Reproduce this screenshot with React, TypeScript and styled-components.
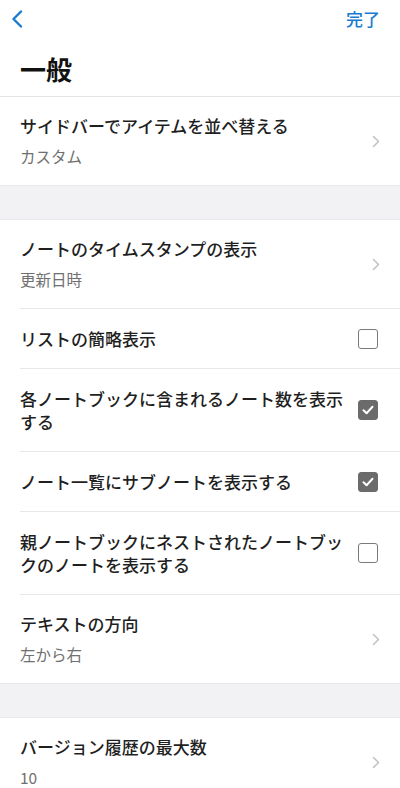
import React from 'react';
import styled, { createGlobalStyle } from 'styled-components';

const GlobalStyle = createGlobalStyle`
	html, body {
		margin: 0;
		padding: 0;
		background: #ffffff;
	}
	body {
		font-family: 'Noto Sans CJK JP', 'Noto Sans', sans-serif;
		-webkit-font-smoothing: antialiased;
	}
`;

type SettingItem =
	| { kind: 'link'; title: string; value: string }
	| { kind: 'check'; title: string; checked: boolean };

const sections: SettingItem[][] = [
	[{ kind: 'link', title: 'サイドバーでアイテムを並べ替える', value: 'カスタム' }],
	[
		{ kind: 'link', title: 'ノートのタイムスタンプの表示', value: '更新日時' },
		{ kind: 'check', title: 'リストの簡略表示', checked: false },
		{ kind: 'check', title: '各ノートブックに含まれるノート数を表示する', checked: true },
		{ kind: 'check', title: 'ノート一覧にサブノートを表示する', checked: true },
		{
			kind: 'check',
			title: '親ノートブックにネストされたノートブックのノートを表示する',
			checked: false,
		},
		{ kind: 'link', title: 'テキストの方向', value: '左から右' },
	],
	[{ kind: 'link', title: 'バージョン履歴の最大数', value: '10' }],
];

const BackIcon = () => (
	<svg width="12" height="18" viewBox="0 0 12 18" fill="none">
		<path
			d="M10 1.5L2.5 9L10 16.5"
			stroke="#1a7bd0"
			strokeWidth="2.4"
			strokeLinecap="round"
			strokeLinejoin="round"
		/>
	</svg>
);

const Chevron = () => (
	<svg width="8" height="13" viewBox="0 0 8 13" fill="none">
		<path
			d="M1.5 1.5L6.5 6.5L1.5 11.5"
			stroke="#c3c3c6"
			strokeWidth="1.6"
			strokeLinecap="round"
			strokeLinejoin="round"
		/>
	</svg>
);

const CheckMark = () => (
	<svg width="12" height="10" viewBox="0 0 12 10" fill="none">
		<path
			d="M1.5 5.2L4.6 8.2L10.5 1.8"
			stroke="#ffffff"
			strokeWidth="2"
			strokeLinecap="round"
			strokeLinejoin="round"
		/>
	</svg>
);

const SettingRow: React.FC<{ item: SettingItem; last: boolean }> = ({ item, last }) => {
	if (item.kind === 'link') {
		return (
			<Row $last={last} $tall>
				<RowText>
					<RowTitle>{item.title}</RowTitle>
					<RowValue>{item.value}</RowValue>
				</RowText>
				<ChevronWrap>
					<Chevron />
				</ChevronWrap>
			</Row>
		);
	}
	return (
		<Row $last={last}>
			<RowText>
				<RowTitle>{item.title}</RowTitle>
			</RowText>
			<Checkbox $checked={item.checked}>{item.checked && <CheckMark />}</Checkbox>
		</Row>
	);
};

const App: React.FC = () => {
	return (
		<>
			<GlobalStyle />
			<Screen>
				<Header>
					<NavBar>
						<BackButton>
							<BackIcon />
						</BackButton>
						<DoneButton>完了</DoneButton>
					</NavBar>
					<PageTitle>一般</PageTitle>
				</Header>
				{sections.map((section, i) => (
					<React.Fragment key={i}>
						{i > 0 && <SectionGap />}
						<Section>
							{section.map((item, j) => (
								<SettingRow key={item.title} item={item} last={j === section.length - 1} />
							))}
						</Section>
					</React.Fragment>
				))}
			</Screen>
		</>
	);
};

const Screen = styled.div`
	width: 400px;
	min-height: 788px;
	background: #ffffff;
	overflow: hidden;
`;

const Header = styled.div`
	height: 97px;
	box-sizing: border-box;
	border-bottom: 1px solid #e4e4e6;
	display: flex;
	flex-direction: column;
`;

const NavBar = styled.div`
	height: 38px;
	display: flex;
	align-items: center;
	justify-content: space-between;
	padding: 0 20px 0 11px;
`;

const BackButton = styled.div`
	display: flex;
	align-items: center;
	width: 20px;
	height: 20px;
`;

const DoneButton = styled.div`
	font-size: 17px;
	font-weight: 500;
	color: #1a7bd0;
	line-height: 20px;
`;

const PageTitle = styled.h1`
	margin: 14px 0 0 20px;
	font-size: 26px;
	line-height: 34px;
	font-weight: 700;
	color: #111111;
`;

const Section = styled.div`
	display: flex;
	flex-direction: column;
`;

const SectionGap = styled.div`
	height: 35px;
	background: #f2f2f4;
	border-top: 1px solid #e8e8ea;
	border-bottom: 1px solid #e8e8ea;
	box-sizing: border-box;
`;

const Row = styled.div<{ $last: boolean; $tall?: boolean }>`
	display: flex;
	align-items: center;
	margin-left: 20px;
	padding: ${(p) => (p.$tall ? '17px 0' : '18px 0')};
	min-height: 59px;
	box-sizing: border-box;
	border-bottom: ${(p) => (p.$last ? 'none' : '1px solid #e8e8ea')};
`;

const RowText = styled.div`
	flex: 1;
	display: flex;
	flex-direction: column;
	gap: 7px;
	padding-right: 10px;
`;

const RowTitle = styled.div`
	font-size: 17px;
	line-height: 23px;
	font-weight: 500;
	color: #1f1f1f;
`;

const RowValue = styled.div`
	font-size: 15.5px;
	line-height: 24px;
	color: #707070;
`;

const ChevronWrap = styled.div`
	display: flex;
	align-items: center;
	margin-right: 20px;
`;

const Checkbox = styled.div<{ $checked: boolean }>`
	width: 20px;
	height: 20px;
	box-sizing: border-box;
	margin-right: 22px;
	flex-shrink: 0;
	border-radius: 3px;
	border: 1.5px solid ${(p) => (p.$checked ? '#6b6b6b' : '#7a7a7a')};
	background: ${(p) => (p.$checked ? '#6b6b6b' : '#ffffff')};
	display: flex;
	align-items: center;
	justify-content: center;
`;

export default App;
